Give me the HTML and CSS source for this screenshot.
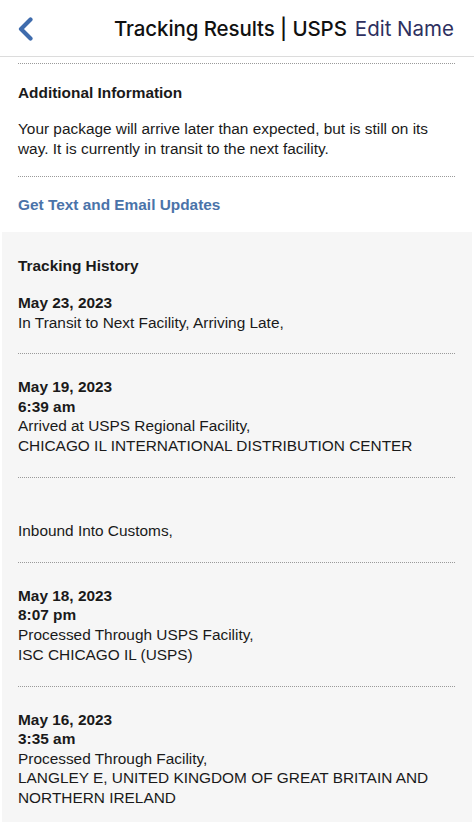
FILE: index.html
```html
<!DOCTYPE html>
<html>
<head>
<meta charset="utf-8">
<link rel="stylesheet" href="styles.css">
</head>
<body>
<header class="topbar">
  <svg class="back" width="18" height="24" viewBox="0 0 18 24"><path d="M13.5 2.5 L4 12 L13.5 21.5" fill="none" stroke="#3f6cad" stroke-width="4.2" stroke-linecap="round" stroke-linejoin="round"/></svg>
  <div class="titles">
    <span class="title">Tracking Results | USPS</span>
    <span class="edit">Edit Name</span>
  </div>
</header>
<main class="content">
  <div class="dots"></div>
  <section class="info">
    <h2 class="heading">Additional Information</h2>
    <p class="para">Your package will arrive later than expected, but is still on its way. It is currently in transit to the next facility.</p>
  </section>
  <div class="dots"></div>
  <a class="link">Get Text and Email Updates</a>
</main>
<section class="history">
  <h2 class="heading">Tracking History</h2>
  <div class="entry first">
    <div class="b">May 23, 2023</div>
    <div>In Transit to Next Facility, Arriving Late,</div>
  </div>
  <div class="dots"></div>
  <div class="entry">
    <div class="b">May 19, 2023</div>
    <div class="b">6:39 am</div>
    <div>Arrived at USPS Regional Facility,</div>
    <div>CHICAGO IL INTERNATIONAL DISTRIBUTION CENTER</div>
  </div>
  <div class="dots"></div>
  <div class="entry">
    <div class="b">&nbsp;</div>
    <div>Inbound Into Customs,</div>
  </div>
  <div class="dots"></div>
  <div class="entry">
    <div class="b">May 18, 2023</div>
    <div class="b">8:07 pm</div>
    <div>Processed Through USPS Facility,</div>
    <div>ISC CHICAGO IL (USPS)</div>
  </div>
  <div class="dots"></div>
  <div class="entry last">
    <div class="b">May 16, 2023</div>
    <div class="b">3:35 am</div>
    <div>Processed Through Facility,</div>
    <div>LANGLEY E, UNITED KINGDOM OF GREAT BRITAIN AND NORTHERN IRELAND</div>
  </div>
</section>
</body>
</html>
```
FILE: styles.css
```css
* { box-sizing: border-box; }
html, body { margin: 0; padding: 0; background: #fff; }
body {
  font-family: "Liberation Sans", Arial, sans-serif;
  color: #1a1a1a;
  font-size: 15.4px;
  line-height: 20px;
  width: 474px;
  height: 826px;
  overflow: hidden;
}
.topbar {
  height: 57px;
  border-bottom: 1px solid #dcdcdc;
  display: flex;
  align-items: center;
  justify-content: space-between;
  padding: 0 20px 0 17px;
}
.back { display: block; margin-top: 2px; }
.titles { display: flex; align-items: baseline; gap: 8px; margin-top: 2px; }
.title {
  font-family: Inter, "Liberation Sans", sans-serif;
  font-weight: 500;
  font-size: 20.5px;
  color: #111;
  letter-spacing: -0.1px;
}
.edit {
  font-family: Inter, "Liberation Sans", sans-serif;
  font-weight: 400;
  font-size: 20.5px;
  color: #2e3060;
}
.content { padding: 6px 19px 17px 18px; }
.dots { border-top: 1px dotted #9a9a9a; height: 0; }
.info { padding: 19px 0 17px; }
.heading { margin: 0; font-size: 15.4px; font-weight: 700; line-height: 20px; }
.para { margin: 16px 0 0; }
.link {
  display: block;
  margin-top: 18px;
  font-weight: 700;
  color: #4a73a9;
}
.history {
  margin: 0 2px;
  background: #f6f6f6;
  padding: 24px 17px 16px 16px;
  height: 590px;
}
.entry { padding: 23px 0 21.5px; line-height: 19.6px; }
.entry.first { padding-top: 17px; padding-bottom: 21px; }
.entry.last { padding-bottom: 0; }
.b { font-weight: 700; }
```
